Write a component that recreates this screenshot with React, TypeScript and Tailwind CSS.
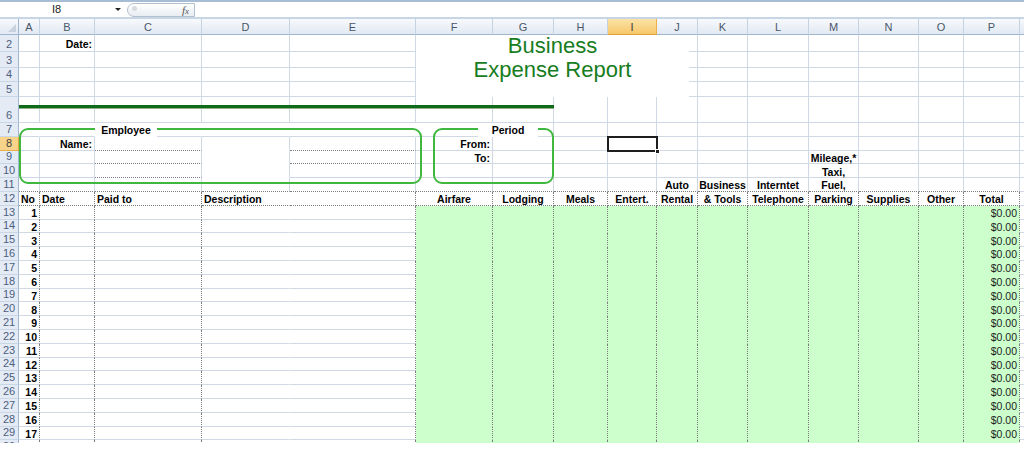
import React from 'react';

type Col = { key: string; w: string };

const COLS: Col[] = [
  { key: 'A', w: 'w-[21px]' },
  { key: 'B', w: 'w-[55px]' },
  { key: 'C', w: 'w-[107px]' },
  { key: 'D', w: 'w-[88px]' },
  { key: 'E', w: 'w-[126px]' },
  { key: 'F', w: 'w-[77px]' },
  { key: 'G', w: 'w-[61px]' },
  { key: 'H', w: 'w-[54px]' },
  { key: 'I', w: 'w-[49px]' },
  { key: 'J', w: 'w-[41px]' },
  { key: 'K', w: 'w-[50px]' },
  { key: 'L', w: 'w-[61px]' },
  { key: 'M', w: 'w-[50px]' },
  { key: 'N', w: 'w-[60px]' },
  { key: 'O', w: 'w-[45px]' },
  { key: 'P', w: 'w-[56px]' },
  { key: 'Q', w: 'w-[64px]' },
];

const ROWS: { n: number; h: string }[] = [
  { n: 2, h: 'h-[17px]' },
  { n: 3, h: 'h-[16px]' },
  { n: 4, h: 'h-[14px]' },
  { n: 5, h: 'h-[15px]' },
  { n: 6, h: 'h-[26px]' },
  ...Array.from({ length: 24 }, (_, i) => ({ n: i + 7, h: 'h-[13.8px]' })),
];

const GREEN_COLS = 'FGHIJKLMNOP';

type Label = { text: string; align: 'left' | 'right' | 'center'; bold?: boolean };

const LABELS: Record<string, Label> = {
  B2: { text: 'Date:', align: 'right', bold: true },
  B8: { text: 'Name:', align: 'right', bold: true },
  F8: { text: 'From:', align: 'right', bold: true },
  F9: { text: 'To:', align: 'right', bold: true },
  M9: { text: 'Mileage,*', align: 'center', bold: true },
  M10: { text: 'Taxi,', align: 'center', bold: true },
  M11: { text: 'Fuel,', align: 'center', bold: true },
  J11: { text: 'Auto', align: 'center', bold: true },
  K11: { text: 'Business', align: 'center', bold: true },
  L11: { text: 'Interntet', align: 'center', bold: true },
  A12: { text: 'No', align: 'left', bold: true },
  B12: { text: 'Date', align: 'left', bold: true },
  C12: { text: 'Paid to', align: 'left', bold: true },
  D12: { text: 'Description', align: 'left', bold: true },
  F12: { text: 'Airfare', align: 'center', bold: true },
  G12: { text: 'Lodging', align: 'center', bold: true },
  H12: { text: 'Meals', align: 'center', bold: true },
  I12: { text: 'Entert.', align: 'center', bold: true },
  J12: { text: 'Rental', align: 'center', bold: true },
  K12: { text: '& Tools', align: 'center', bold: true },
  L12: { text: 'Telephone', align: 'center', bold: true },
  M12: { text: 'Parking', align: 'center', bold: true },
  N12: { text: 'Supplies', align: 'center', bold: true },
  O12: { text: 'Other', align: 'center', bold: true },
  P12: { text: 'Total', align: 'center', bold: true },
};

const ALIGN = {
  left: 'justify-start',
  right: 'justify-end',
  center: 'justify-center',
};

function getLabel(r: number, c: string): Label | undefined {
  if (r >= 13 && c === 'A') return { text: String(r - 12), align: 'right', bold: true };
  if (r >= 13 && c === 'P') return { text: '$0.00', align: 'right' };
  return LABELS[c + r];
}

// borders per side: gridline, dotted table rule, or hidden (merged / filled cells)
function cellClasses(r: number, c: string) {
  const green = r >= 13 && GREEN_COLS.includes(c);
  const inTable = r >= 12 && c !== 'Q';
  const dotB = 'border-b-[#7c7c7c] [border-bottom-style:dotted]';

  let right = 'border-r-[#d0d7e5]';
  if (inTable) {
    right = c === 'D' ? 'border-r-white' : 'border-r-[#7c7c7c] [border-right-style:dotted]';
  } else if (r === 7 && 'ABCDE'.includes(c)) {
    right = 'border-r-white';
  }

  let bottom = 'border-b-[#d0d7e5]';
  if ((r === 11 || r === 12) && c !== 'Q') bottom = dotB;
  else if (c === 'C' && r >= 8 && r <= 10) bottom = dotB;
  else if (c === 'E' && (r === 8 || r === 9)) bottom = dotB;
  else if (c === 'D' && r >= 8 && r <= 10) bottom = 'border-b-white';
  else if (green) bottom = 'border-b-[#ccffcc]';

  return `${green ? 'bg-[#ccffcc]' : 'bg-white'} border-r border-b ${right} ${bottom}`;
}

function FormulaBar() {
  return (
    <div className="w-full">
      <div className="h-[2px] bg-[#a7bcd5]" />
      <div className="h-[15px] flex items-stretch bg-white">
        <div className="w-[127px] shrink-0 flex items-center justify-between pl-[52px] pr-[6px]">
          <span className="text-[11px] text-[#222] leading-none">I8</span>
          <span className="w-0 h-0 border-l-[3px] border-r-[3px] border-t-[3px] border-l-transparent border-r-transparent border-t-[#222]" />
        </div>
        <div className="w-[68px] shrink-0 flex items-center justify-between pl-[4px] pr-[5px] rounded-l-full border border-[#b3c0cf] bg-gradient-to-b from-white to-[#e8edf3] mt-px">
          <span className="w-[5px] h-[5px] rounded-full bg-[#d6dbe1] -mt-[3px]" />
          <span className="text-[11px] leading-none italic font-['Liberation_Serif',serif] text-[#555]">
            f<span className="text-[9px]">x</span>
          </span>
        </div>
        <div className="flex-1 bg-white" />
      </div>
      <div className="h-[2px] bg-[#c8d5e5]" />
    </div>
  );
}

function ColumnHeader() {
  return (
    <div className="flex h-[16px]">
      <div className="w-[19px] shrink-0 flex items-end justify-end p-[2px] bg-gradient-to-b from-[#f7f9fc] to-[#e2e9f2] border-r border-b border-[#9eb6ce]">
        <span className="w-[8px] h-[8px] bg-[#c8d2de] [clip-path:polygon(100%_0,100%_100%,0_100%)]" />
      </div>
      {COLS.map((col) => {
        const sel = col.key === 'I';
        return (
          <div
            key={col.key}
            className={`${col.w} shrink-0 flex items-center justify-center pt-[2px] text-[11px] leading-none border-r border-b ${
              sel
                ? 'bg-gradient-to-b from-[#fbe3a6] to-[#f6c768] border-r-[#e9b04b] border-b-[#e0a23a] text-[#3c3c3c]'
                : 'bg-gradient-to-b from-[#f7f9fc] to-[#e2e9f2] border-r-[#c5d3e3] border-b-[#9eb6ce] text-[#4a566a]'
            }`}
          >
            {col.key}
          </div>
        );
      })}
    </div>
  );
}

function SheetRow({ n, h }: { n: number; h: string }) {
  const sel = n === 8;
  return (
    <div className={`flex ${h}`}>
      <div
        className={`w-[19px] shrink-0 flex items-end justify-center pb-[1px] text-[11px] leading-none border-r border-b ${
          sel
            ? 'bg-[#f8d48a] border-r-[#e0a23a] border-b-[#e9b04b] text-[#3c3c3c]'
            : 'bg-[#e4ebf5] border-r-[#9eb6ce] border-b-[#c9d6e6] text-[#4d6080]'
        }`}
      >
        {n}
      </div>
      {COLS.map((col) => {
        const label = getLabel(n, col.key);
        return (
          <div
            key={col.key}
            className={`${col.w} shrink-0 flex items-center pt-[2px] px-[2px] whitespace-nowrap ${cellClasses(n, col.key)} ${
              label ? ALIGN[label.align] : ''
            }`}
          >
            {label && (
              <span className={`text-[10.5px] leading-none ${label.bold ? 'font-bold text-black' : 'text-[#222]'}`}>
                {label.text}
              </span>
            )}
          </div>
        );
      })}
    </div>
  );
}

export default function App() {
  return (
    <div className="w-[1024px] h-[456px] bg-white overflow-hidden font-['Liberation_Sans',Arial,sans-serif]">
      <FormulaBar />
      <div className="relative h-[424px] overflow-hidden">
        <ColumnHeader />
        {ROWS.map((r) => (
          <SheetRow key={r.n} n={r.n} h={r.h} />
        ))}

        {/* title text box drawn over F2:J5 */}
        <div className="absolute left-[416px] top-[16px] w-[273px] h-[62px] bg-white flex flex-col items-center">
          <div className="-mt-px text-[22px] leading-[24px] text-[#177d1e]">Business</div>
          <div className="text-[22px] leading-[24px] text-[#177d1e]">Expense Report</div>
        </div>

        {/* green rule */}
        <div className="absolute left-[19px] top-[86px] w-[535px]">
          <div className="h-[3px] bg-[#106a18]" />
          <div className="h-px bg-[#8fae92]" />
        </div>

        {/* employee box */}
        <div className="absolute left-[19px] top-[109px] w-[403px] h-[56px] border-2 border-[#40b840] rounded-[9px]">
          <div className="absolute left-[74px] top-[-7px] w-[62px] h-[14px] bg-white flex items-center justify-center">
            <span className="text-[10.5px] leading-none font-bold text-black">Employee</span>
          </div>
        </div>

        {/* period box */}
        <div className="absolute left-[433px] top-[109px] w-[121px] h-[56px] border-2 border-[#40b840] rounded-[9px]">
          <div className="absolute left-[43px] top-[-7px] w-[60px] h-[14px] bg-white flex items-center justify-center">
            <span className="text-[10.5px] leading-none font-bold text-black">Period</span>
          </div>
        </div>

        {/* selected cell I8 */}
        <div className="absolute left-[607px] top-[117px] w-[51px] h-[16px] border-2 border-[#1e1e1e]">
          <div className="absolute right-[-4px] bottom-[-4px] w-[5px] h-[5px] bg-[#1e1e1e] border border-white" />
        </div>
      </div>
    </div>
  );
}
